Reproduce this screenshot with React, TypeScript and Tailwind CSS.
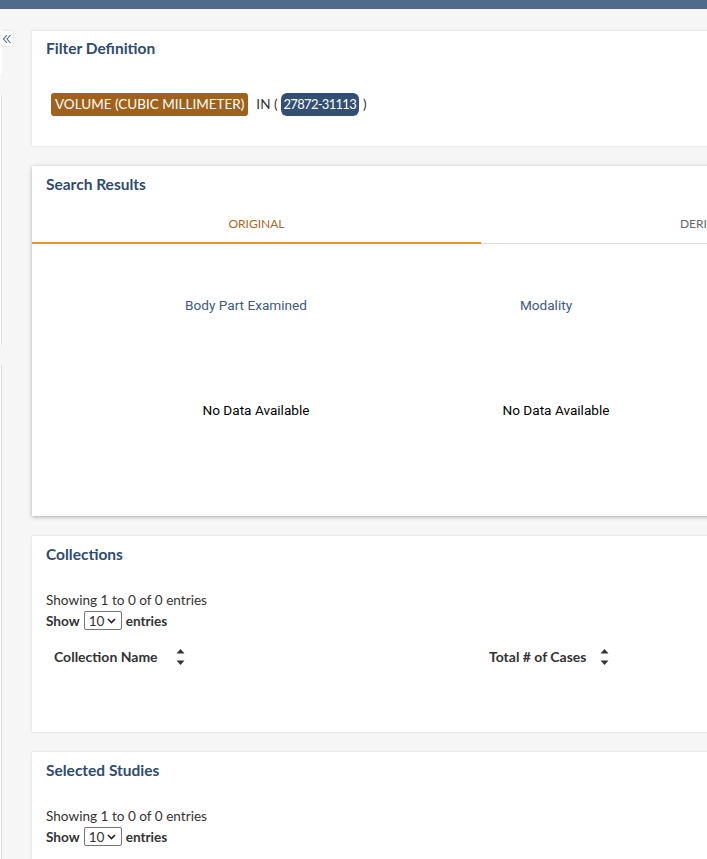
import type { ReactNode } from "react";

const heading = "text-[15.5px] font-bold leading-5 text-[#2e4b72]";

function Card({ className, children }: { className: string; children: ReactNode }) {
  return (
    <div className={`w-[900px] bg-white shadow-[0_0_3px_rgba(0,0,0,0.12)] ${className}`}>{children}</div>
  );
}

function SortIcon() {
  return (
    <svg width="9" height="18" viewBox="0 0 9 18" className="shrink-0">
      <path d="M4.5 1 L8.5 5.5 H0.5 Z" fill="#333" />
      <path d="M4.5 17 L8.5 12.5 H0.5 Z" fill="#333" />
    </svg>
  );
}

function Entries() {
  return (
    <div className="text-[13.6px] leading-[18px] text-[#333]">
      <p>Showing 1 to 0 of 0 entries</p>
      <div className="mt-[2px] flex items-center font-bold">
        <span>Show</span>
        <span className="mx-[4px] flex h-[19px] w-[38px] items-center justify-between rounded-[2px] border border-[#767676] pl-[4px] pr-[5px] font-normal">
          10
          <svg width="9" height="6" viewBox="0 0 9 6">
            <path d="M1 1 L4.5 4.5 L8 1" fill="none" stroke="#222" strokeWidth="1.6" />
          </svg>
        </span>
        <span>entries</span>
      </div>
    </div>
  );
}

export default function App() {
  return (
    <div className="h-[859px] w-[707px] overflow-hidden bg-[#f6f6f6] font-['Lato','Open_Sans',sans-serif]">
      <div className="h-[9px] bg-[#4f6a8d]" />
      <div className="flex">
        {/* sidebar */}
        <div className="relative w-[32px] shrink-0">
          <div className="mt-[21px] h-[45px] w-[2px] bg-white" />
          <div className="mt-[20px] h-[250px] w-[2px] border-r border-[#e2e2e2] bg-white" />
          <div className="mt-[20px] h-[520px] w-[2px] border-r border-[#dcdcdc] bg-[#fafafa]" />
          <div className="absolute left-[1px] top-[22px] flex h-[15px] w-[12px] items-center justify-center rounded-[2px] bg-white shadow-[0_0_2px_rgba(0,0,0,0.15)]">
            <svg width="10" height="10" viewBox="0 0 10 10">
              <path
                d="M5 1 L1.5 5 L5 9 M8.5 1 L5 5 L8.5 9"
                fill="none"
                stroke="#3c6f95"
                strokeWidth="1.1"
              />
            </svg>
          </div>
        </div>

        {/* main */}
        <div className="flex flex-col gap-[20px] pt-[22px]">
          <Card className="h-[115px] px-[14px] pt-[7px]">
            <h2 className={heading}>Filter Definition</h2>
            <div className="mt-[35px] flex items-center pl-[5px] text-[13.5px] text-[#333]">
              <span className="flex h-[23px] items-center rounded-[3px] bg-[#a0621a] px-[4px] text-white">
                VOLUME (CUBIC MILLIMETER)
              </span>
              <span className="ml-[8px] mr-[3px]">IN (</span>
              <span className="flex h-[23px] items-center rounded-[6px] bg-[#324f74] px-[3px] text-[13px] tracking-[-0.7px] text-white">
                27872-31113
              </span>
              <span className="ml-[4px]">)</span>
            </div>
          </Card>

          <Card className="h-[350px] pt-[8px] shadow-[0_1px_4px_rgba(0,0,0,0.3)]">
            <h2 className={`${heading} px-[14px]`}>Search Results</h2>
            <div className="mt-[22px] flex border-b border-[#dcdcdc] text-[12px] leading-4">
              <div className="-mb-px w-[449px] shrink-0 border-b-2 border-[#ea962b] pb-[10px] text-center text-[#a8671f]">
                ORIGINAL
              </div>
              <div className="w-[449px] shrink-0 pb-[10px] text-center text-[#666]">DERIVED</div>
            </div>
            <div className="flex pl-[64px] font-['Roboto',sans-serif] text-[13.6px] leading-[18px]">
              {["Body Part Examined", "Modality", "Series"].map((t) => (
                <div key={t} className="w-[300px] shrink-0">
                  <p className="mt-[52px] text-center text-[#3c5a82]">{t}</p>
                  <p className="mt-[87px] pl-[20px] text-center text-black">No Data Available</p>
                </div>
              ))}
            </div>
          </Card>

          <Card className="h-[196px] px-[14px] pt-[8px]">
            <h2 className={heading}>Collections</h2>
            <div className="mt-[27px]">
              <Entries />
            </div>
            <div className="mt-[16px] flex text-[14px] font-bold text-[#333]">
              <div className="flex w-[435px] shrink-0 items-center pl-[8px]">
                <span>Collection Name</span>
                <span className="ml-[18px]">
                  <SortIcon />
                </span>
              </div>
              <div className="flex items-center pl-[8px]">
                <span>Total # of Cases</span>
                <span className="ml-[13px]">
                  <SortIcon />
                </span>
              </div>
            </div>
          </Card>

          <Card className="h-[200px] px-[14px] pt-[8px]">
            <h2 className={heading}>Selected Studies</h2>
            <div className="mt-[27px]">
              <Entries />
            </div>
          </Card>
        </div>
      </div>
    </div>
  );
}
